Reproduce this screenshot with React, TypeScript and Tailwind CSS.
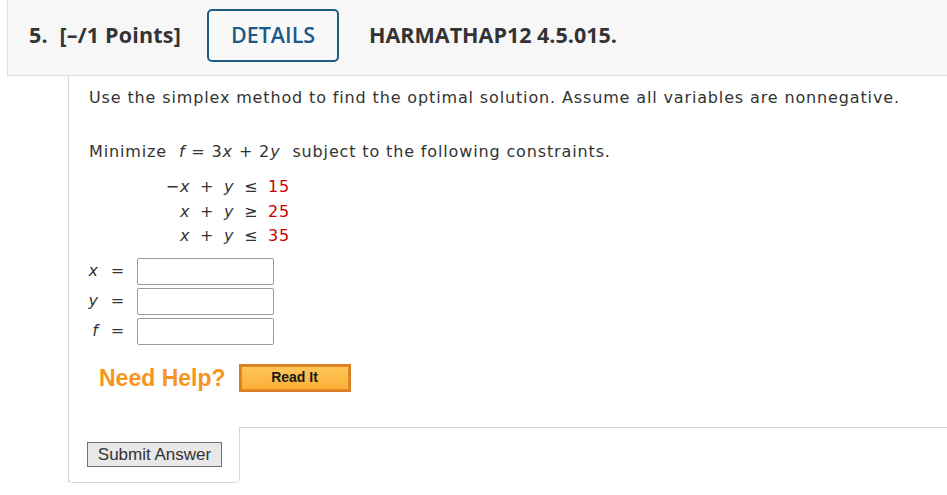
import React from "react";

const body = { fontFamily: '"DejaVu Sans", Verdana, sans-serif', letterSpacing: "0.86px" };
const arial = { fontFamily: '"Liberation Sans", Arial, sans-serif', letterSpacing: "0px" };

export default function App() {
  return (
    <div className="w-[947px] h-[495px] bg-white overflow-hidden relative">
      <div
        className="ml-[7px] h-[76px] bg-[#f7f7f7] border-l border-b border-[#e0e0e0] flex items-start pt-[9px] text-[#333]"
        style={{ fontFamily: '"Open Sans", sans-serif' }}
      >
        <div className="ml-[21px] h-[53px] flex items-center text-[21.5px] font-bold tracking-[0.2px]">5.&nbsp; [–/1 Points]</div>
        <div className="ml-[26px] w-[132px] h-[53px] border-2 border-[#1e5c82] rounded-[5px] flex items-center justify-center text-[21.5px] font-semibold text-[#1b5a8a] bg-[#f9f9f9]">
          DETAILS
        </div>
        <div className="ml-[30px] h-[53px] flex items-center text-[21.5px] font-bold">HARMATHAP12 4.5.015.</div>
      </div>
      <div className="ml-[68px] border-l border-[#d6d6d6] text-[#333]" style={body}>
        <div className="pt-[10px] pl-[20px] text-[16px] leading-[24px]">
          Use the simplex method to find the optimal solution. Assume all variables are nonnegative.
        </div>
        <div className="pt-[30px] pl-[20px] text-[16px] leading-[24px]">
          Minimize&nbsp; <i>f</i> = 3<i>x</i> + 2<i>y</i>&nbsp; subject to the following constraints.
        </div>
        <div
          className="pl-[96px] pt-[11px] w-[221px] text-[16px] leading-[24.5px] flex flex-col items-end"
          style={{ wordSpacing: "3.7px" }}
        >
          <div>−<i>x</i> + <i>y</i> ≤ <span className="text-[#cc0000]">15</span></div>
          <div><i>x</i> + <i>y</i> ≥ <span className="text-[#cc0000]">25</span></div>
          <div><i>x</i> + <i>y</i> ≤ <span className="text-[#cc0000]">35</span></div>
        </div>
        <div className="pt-[9px] flex flex-col gap-[3px]">
          {["x", "y", "f"].map((v) => (
            <div key={v} className="flex items-center h-[27px]">
              <div className="w-[68px] text-right text-[16px] pr-[12px]">
                <i>{v}</i>&nbsp; =
              </div>
              <div className="w-[137px] h-[27px] border border-[#9a9a9a] rounded-[2px] bg-white" />
            </div>
          ))}
        </div>
        <div className="pt-[16px] pl-[30px] flex items-center" style={arial}>
          <span className="text-[23px] font-bold text-[#f7941d]">Need Help?</span>
          <div className="ml-[13px] w-[112px] h-[28px] bg-[#dc7f24] p-[2px]">
            <div className="w-full h-full border border-[#e08a2e] bg-gradient-to-b from-[#ffc55a] to-[#fbb034] flex items-center justify-center text-[14px] font-bold text-[#1a1a1a]">
              Read It
            </div>
          </div>
        </div>
        <div className="flex mt-[32px]">
          <div className="w-[172px] h-[56px] -ml-px border-l border-b border-r border-[#d6d6d6] rounded-b-[5px] pl-[18px] pt-[15px]">
            <div
              className="w-[135px] h-[25px] bg-[#e8e8e8] border border-[#707070] flex items-center justify-center text-[17px] text-[#333]"
              style={arial}
            >
              Submit Answer
            </div>
          </div>
          <div className="flex-1 border-t border-[#d6d6d6] -ml-px" />
        </div>
      </div>
    </div>
  );
}
